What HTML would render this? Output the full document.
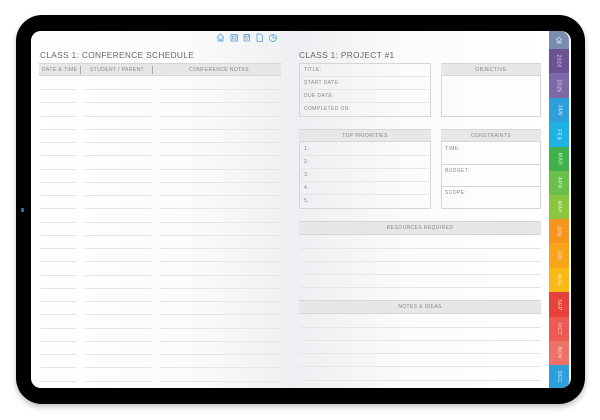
<!DOCTYPE html>
<html><head><style>
*{margin:0;padding:0;box-sizing:border-box}
body{width:600px;height:420px;background:#fff;position:relative;overflow:hidden;font-family:"Liberation Sans",sans-serif}
.abs{position:absolute}
.tab{position:absolute;left:549px;width:20px;color:rgba(255,255,255,.8);font-size:5px;letter-spacing:.5px;display:flex;align-items:center;justify-content:center}
.tab span{transform:rotate(90deg);white-space:nowrap}
.hdr{position:absolute;background:#e7e7e8;border-top:1px solid #d6d6d8;border-bottom:1px solid #d6d6d8;color:#888;font-size:5px;letter-spacing:.4px;display:flex;align-items:center;justify-content:center}
.ln{position:absolute;height:1px;background:#e4e5e7}
.box{position:absolute;border:1px solid #d6d6d8}
.lbl{position:absolute;font-size:5px;color:#888;letter-spacing:.4px}
.title{position:absolute;font-size:8.3px;color:#666;letter-spacing:.35px;white-space:nowrap}
</style></head><body>
<div class="abs" style="left:16px;top:15px;width:569px;height:389px;background:#000;border-radius:26px;box-shadow:0 3px 6px rgba(0,0,0,.25)"></div>
<div class="abs" style="left:21px;top:208px;width:3px;height:4px;background:#2a6fc4;border-radius:1px"></div>
<div class="abs" style="left:31px;top:31px;width:540px;height:357px;border-radius:10px;overflow:hidden;background:#fff">
 <div class="abs" style="left:0;top:0;width:259px;height:357px;background:linear-gradient(90deg,#fff 0%,#fafbfc 60%,#eef0f2 100%)"></div>
 <div class="abs" style="left:259px;top:0;width:259px;height:357px;background:linear-gradient(90deg,#eceef1 0%,#fafbfc 45%,#fff 100%)"></div>
</div>
<div class="tab" style="top:31px;height:18px;background:#7a8bb0;border-top-right-radius:9px"><svg width="8" height="8" viewBox="0 0 8 8"><path d="M1 4L4 1.2 7 4M2 3.3V7H6V3.3M3.3 7V5H4.7V7" fill="none" stroke="#dde" stroke-width=".7"/></svg></div>
<div class="tab" style="top:49px;height:24px;background:#6a5295"><span>2024</span></div>
<div class="tab" style="top:73px;height:25px;background:#7d68a8"><span>2025</span></div>
<div class="tab" style="top:98px;height:24px;background:#2f9fdc"><span>JAN</span></div>
<div class="tab" style="top:122px;height:25px;background:#1fb0e4"><span>FEB</span></div>
<div class="tab" style="top:147px;height:24px;background:#3fb04a"><span>MAR</span></div>
<div class="tab" style="top:171px;height:24px;background:#6abf4b"><span>APR</span></div>
<div class="tab" style="top:195px;height:24px;background:#8cc63f"><span>MAY</span></div>
<div class="tab" style="top:219px;height:24px;background:#f7941d"><span>JUN</span></div>
<div class="tab" style="top:243px;height:25px;background:#f9a51b"><span>JUL</span></div>
<div class="tab" style="top:268px;height:24px;background:#fbb917"><span>AUG</span></div>
<div class="tab" style="top:292px;height:25px;background:#e8413a"><span>SEP</span></div>
<div class="tab" style="top:317px;height:24px;background:#ec5a52"><span>OCT</span></div>
<div class="tab" style="top:341px;height:24px;background:#f07167"><span>NOV</span></div>
<div class="tab" style="top:365px;height:23px;background:#2e9fdb;border-bottom-right-radius:7px"><span>DEC</span></div>
<svg class="abs" style="left:216px;top:32px" width="64" height="11" viewBox="0 0 64 11" fill="none" stroke="#5a9ee0" stroke-width=".8">
<path d="M1 5.5L4.5 2 8 5.5M2 4.5V9H7V4.5M3.8 9V7H5.2V9"/>
<rect x="15" y="2.5" width="6.5" height="6.5"/><rect x="16.5" y="4" width="3.5" height="3"/>
<path d="M28 2.5H33.5V9H28Z M29.3 2.5V5H32.2V2.5 M29.3 7H32.2"/>
<path d="M41 2H44.5L46.5 4V9.5H41Z"/>
<circle cx="57" cy="6" r="3.5"/><path d="M57 2.5V6H60.5"/>
</svg>
<div class="title" style="left:40px;top:50px">CLASS 1: CONFERENCE SCHEDULE</div>
<div class="hdr" style="left:39px;top:63px;width:242px;height:13px;justify-content:flex-start">
 <span style="position:absolute;left:3px">DATE &amp; TIME</span>
 <span style="position:absolute;left:41px;top:2px;width:1px;height:8px;background:#aaa"></span>
 <span style="position:absolute;left:51px">STUDENT / PARENT</span>
 <span style="position:absolute;left:113px;top:2px;width:1px;height:8px;background:#aaa"></span>
 <span style="position:absolute;left:150px">CONFERENCE NOTES</span>
</div>
<div id="L"></div>
<div class="title" style="left:299px;top:50px">CLASS 1: PROJECT #1</div>
<div class="box" style="left:299px;top:63px;width:132px;height:54px"></div>
<div class="lbl" style="left:304px;top:67px">TITLE:</div>
<div class="ln" style="left:301px;top:76px;width:128px"></div>
<div class="lbl" style="left:304px;top:80px">START DATE:</div>
<div class="ln" style="left:301px;top:89px;width:128px"></div>
<div class="lbl" style="left:304px;top:93px">DUE DATE:</div>
<div class="ln" style="left:301px;top:102px;width:128px"></div>
<div class="lbl" style="left:304px;top:106px">COMPLETED ON:</div>
<div class="box" style="left:441px;top:63px;width:100px;height:54px"></div>
<div class="hdr" style="left:441px;top:63px;width:100px;height:13px">OBJECTIVE</div>
<div class="box" style="left:299px;top:129px;width:132px;height:80px"></div>
<div class="hdr" style="left:299px;top:129px;width:132px;height:13px">TOP PRIORITIES</div>
<div class="lbl" style="left:304px;top:146px">1.</div><div class="ln" style="left:301px;top:155px;width:128px"></div>
<div class="lbl" style="left:304px;top:159px">2.</div><div class="ln" style="left:301px;top:168px;width:128px"></div>
<div class="lbl" style="left:304px;top:172px">3.</div><div class="ln" style="left:301px;top:181px;width:128px"></div>
<div class="lbl" style="left:304px;top:185px">4.</div><div class="ln" style="left:301px;top:194px;width:128px"></div>
<div class="lbl" style="left:304px;top:198px">5.</div>
<div class="box" style="left:441px;top:129px;width:100px;height:80px"></div>
<div class="hdr" style="left:441px;top:129px;width:100px;height:13px">CONSTRAINTS</div>
<div class="lbl" style="left:445px;top:146px">TIME:</div>
<div class="ln" style="left:442px;top:164px;width:98px;background:#d6d6d8"></div>
<div class="lbl" style="left:445px;top:168px">BUDGET:</div>
<div class="ln" style="left:442px;top:186px;width:98px;background:#d6d6d8"></div>
<div class="lbl" style="left:445px;top:190px">SCOPE:</div>
<div class="hdr" style="left:299px;top:221px;width:242px;height:14px">RESOURCES REQUIRED</div>
<div class="ln" style="left:299px;top:248px;width:242px"></div>
<div class="ln" style="left:299px;top:261px;width:242px"></div>
<div class="ln" style="left:299px;top:274px;width:242px"></div>
<div class="ln" style="left:299px;top:287px;width:242px"></div>
<div class="hdr" style="left:299px;top:300px;width:242px;height:14px">NOTES &amp; IDEAS</div>
<div class="ln" style="left:299px;top:327px;width:242px"></div>
<div class="ln" style="left:299px;top:340px;width:242px"></div>
<div class="ln" style="left:299px;top:353px;width:242px"></div>
<div class="ln" style="left:299px;top:366px;width:242px"></div>
<div class="ln" style="left:299px;top:380px;width:242px"></div>
<script>
var h='';for(var i=0;i<23;i++){var y=Math.round(89+i*13.25);
h+='<div class="ln" style="left:40px;top:'+y+'px;width:36px"></div><div class="ln" style="left:85px;top:'+y+'px;width:66px"></div><div class="ln" style="left:159px;top:'+y+'px;width:122px"></div>';}
document.getElementById('L').innerHTML=h;
</script>
</body></html>
